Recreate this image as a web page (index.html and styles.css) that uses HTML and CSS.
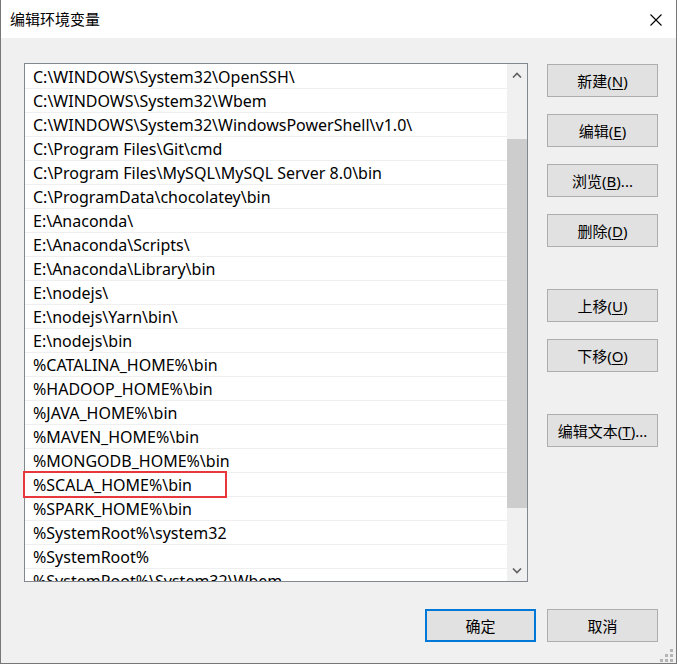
FILE: index.html
```html
<!doctype html>
<html lang="zh-cn">
	<head>
		<meta charset="UTF-8">
		<title>编辑环境变量</title>
		<link rel="stylesheet" href="styles.css">
	</head>
	<body>
		<div class="window">
			<div class="titlebar">
				<span class="title">编辑环境变量</span>
				<span class="close">
					<svg width="12" height="12" viewBox="0 0 12 12"><path d="M0.5 0.5L11.5 11.5M11.5 0.5L0.5 11.5" stroke="#000" stroke-width="1.1" fill="none"/></svg>
				</span>
			</div>
			<div class="content">
				<div class="main">
					<div class="list">
						<ul class="rows">
							<li>C:\WINDOWS\System32\OpenSSH\</li>
							<li>C:\WINDOWS\System32\Wbem</li>
							<li>C:\WINDOWS\System32\WindowsPowerShell\v1.0\</li>
							<li>C:\Program Files\Git\cmd</li>
							<li>C:\Program Files\MySQL\MySQL Server 8.0\bin</li>
							<li>C:\ProgramData\chocolatey\bin</li>
							<li>E:\Anaconda\</li>
							<li>E:\Anaconda\Scripts\</li>
							<li>E:\Anaconda\Library\bin</li>
							<li>E:\nodejs\</li>
							<li>E:\nodejs\Yarn\bin\</li>
							<li>E:\nodejs\bin</li>
							<li>%CATALINA_HOME%\bin</li>
							<li>%HADOOP_HOME%\bin</li>
							<li>%JAVA_HOME%\bin</li>
							<li>%MAVEN_HOME%\bin</li>
							<li>%MONGODB_HOME%\bin</li>
							<li>%SCALA_HOME%\bin</li>
							<li>%SPARK_HOME%\bin</li>
							<li>%SystemRoot%\system32</li>
							<li>%SystemRoot%</li>
							<li>%SystemRoot%\System32\Wbem</li>
						</ul>
						<div class="scrollbar">
							<div class="arrow">
								<svg width="10" height="6" viewBox="0 0 10 6"><path d="M1 5.5L5 1.5L9 5.5" stroke="#606060" stroke-width="1.6" fill="none"/></svg>
							</div>
							<div class="track">
								<div class="thumb"></div>
							</div>
							<div class="arrow">
								<svg width="10" height="6" viewBox="0 0 10 6"><path d="M1 0.5L5 4.5L9 0.5" stroke="#606060" stroke-width="1.6" fill="none"/></svg>
							</div>
						</div>
						<div class="mark"></div>
					</div>
					<div class="side">
						<button class="btn">新建(<u>N</u>)</button>
						<button class="btn">编辑(<u>E</u>)</button>
						<button class="btn">浏览(<u>B</u>)...</button>
						<button class="btn">删除(<u>D</u>)</button>
						<button class="btn group">上移(<u>U</u>)</button>
						<button class="btn">下移(<u>O</u>)</button>
						<button class="btn group">编辑文本(<u>T</u>)...</button>
					</div>
				</div>
				<div class="footer">
					<button class="btn default">确定</button>
					<button class="btn">取消</button>
				</div>
			</div>
			<div class="grip">
				<i class="d1"></i>
				<i class="d2"></i><i class="d3"></i>
				<i class="d4"></i><i class="d5"></i><i class="d6"></i>
			</div>
		</div>
	</body>
</html>
```
FILE: styles.css
```css
html,body,div,ul,li,button {
	margin: 0;
	padding: 0;
	box-sizing: border-box;
}
body {
	background: #f0f0f0;
	font-family: "Noto Sans", "Noto Sans CJK SC", sans-serif;
	font-size: 15px;
	color: #000;
}
ul {
	list-style: none;
}
.window {
	width: 677px;
	height: 664px;
	border: 1px solid #777;
	border-top: 0;
	position: relative;
	display: flex;
	flex-direction: column;
}
.titlebar {
	height: 38px;
	background: #fff;
	display: flex;
	align-items: center;
	justify-content: space-between;
	padding: 0 14px 0 9px;
}
.title {
	font-size: 15px;
	line-height: 38px;
}
.close {
	display: flex;
	margin-top: 1px;
}
.content {
	flex: 1;
	padding: 25px 18px 0 23px;
	background: #f0f0f0;
}
.main {
	display: flex;
	gap: 19px;
}
.list {
	width: 504px;
	height: 519px;
	border: 1px solid #828790;
	background: #fff;
	display: flex;
	position: relative;
}
.rows {
	flex: 1;
	overflow: hidden;
	padding-top: 1px;
}
.rows li {
	height: 24px;
	line-height: 24px;
	font-size: 16px;
	border-bottom: 1px solid #efefef;
	padding-left: 8px;
	white-space: nowrap;
}
.scrollbar {
	width: 20px;
	background: #f0f0f0;
	display: flex;
	flex-direction: column;
}
.arrow {
	height: 21px;
	display: flex;
	align-items: center;
	justify-content: center;
}
.track {
	flex: 1;
}
.thumb {
	margin-top: 54px;
	height: 369px;
	background: #cdcdcd;
}
.mark {
	position: absolute;
	left: -2px;
	top: 407px;
	width: 204px;
	height: 27px;
	border: 2px solid #e8383d;
}
.side {
	display: flex;
	flex-direction: column;
	gap: 17px;
	padding-top: 1px;
}
.btn {
	width: 111px;
	height: 33px;
	background: #e1e1e1;
	border: 1px solid #adadad;
	font-family: inherit;
	font-size: 15px;
	color: #000;
}
.btn u {
	text-underline-offset: 2px;
}
.side .group {
	margin-top: 25px;
}
.footer {
	display: flex;
	justify-content: flex-end;
	gap: 11px;
	margin-top: 27px;
}
.btn.default {
	border: 2px solid #0078d7;
}
.grip {
	position: absolute;
	right: 3px;
	bottom: 1px;
	width: 13px;
	height: 13px;
}
.grip i {
	position: absolute;
	width: 3px;
	height: 3px;
	background: #b4b4b4;
}
.grip .d1 { left: 10px; top: 0; }
.grip .d2 { left: 5px; top: 5px; }
.grip .d3 { left: 10px; top: 5px; }
.grip .d4 { left: 0; top: 10px; }
.grip .d5 { left: 5px; top: 10px; }
.grip .d6 { left: 10px; top: 10px; }
```
